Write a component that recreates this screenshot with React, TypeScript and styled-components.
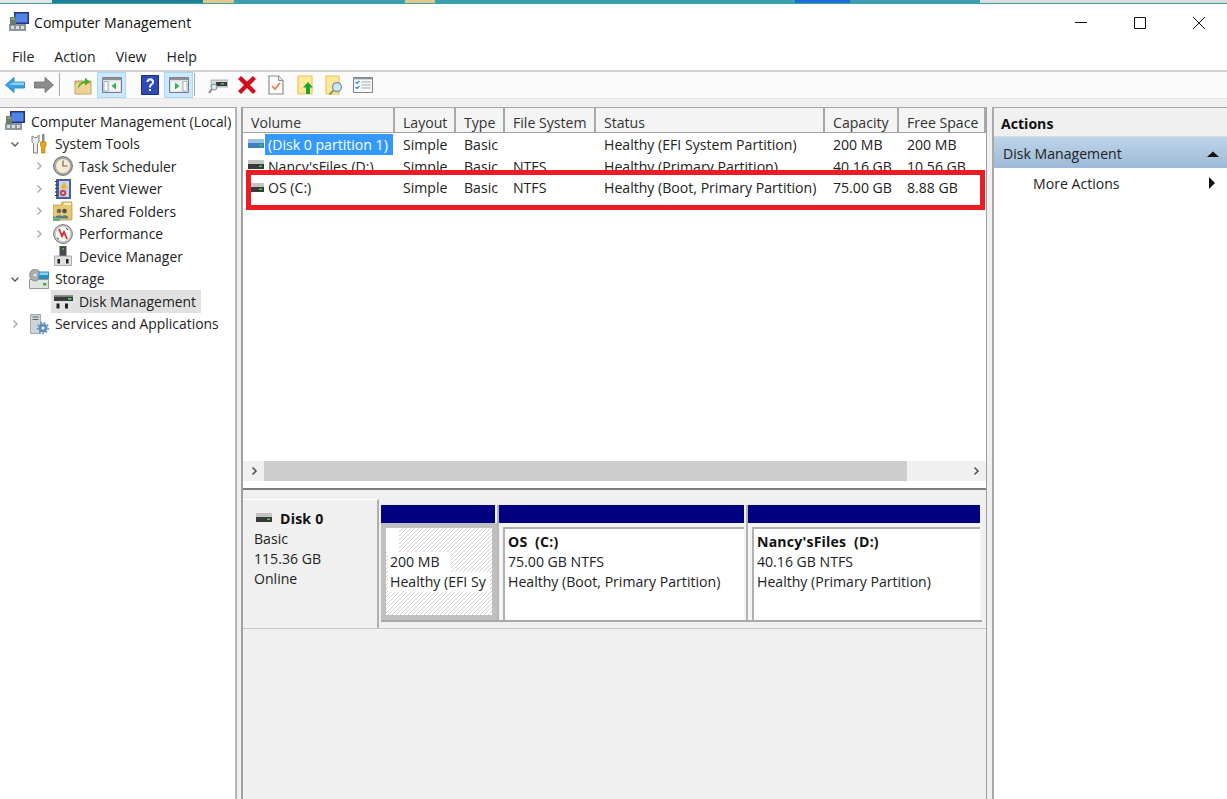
import React from 'react'
import styled, { createGlobalStyle } from 'styled-components'

const GlobalStyle = createGlobalStyle`
  html, body {
    margin: 0;
    padding: 0;
    background: #f0f0f0;
  }
  * {
    box-sizing: border-box;
  }
`

const Window = styled.div`
  display: flex;
  flex-direction: column;
  width: 1227px;
  height: 799px;
  overflow: hidden;
  font-family: 'Open Sans', 'Noto Sans', sans-serif;
  font-size: 14.1px;
  color: #1c1c1c;
  background: #f0f0f0;
`

const DesktopStrip = styled.div`
  display: flex;
  flex: none;
  height: 4px;
  border-bottom: 1px solid #3f9db0;
`

const StripPiece = styled.div<{ $width: number; $color: string }>`
  flex: none;
  width: ${({ $width }) => $width}px;
  background: ${({ $color }) => $color};
`

const TitleBar = styled.div`
  display: flex;
  flex: none;
  align-items: center;
  justify-content: space-between;
  height: 38px;
  padding-left: 9px;
  background: #fff;
`

const TitleText = styled.div`
  display: flex;
  align-items: center;
  gap: 5px;
  padding-bottom: 2px;
  color: #111;
`

const WindowControls = styled.div`
  display: flex;
  align-items: center;
  margin-right: -1px;
`

const ControlButton = styled.div`
  display: flex;
  align-items: center;
  justify-content: center;
  width: 59px;
  height: 38px;
`

const MenuBar = styled.div`
  display: flex;
  flex: none;
  align-items: center;
  gap: 20px;
  height: 28px;
  padding-left: 12px;
  background: #fff;
  color: #222;
`

const Toolbar = styled.div`
  display: flex;
  flex: none;
  align-items: stretch;
  height: 29px;
  background: #fbfbfb;
  border-top: 2px solid #d0d0d0;
  border-bottom: 1px solid #e6e6e6;
`

const ToolButton = styled.div<{ $active?: boolean; $gap?: number }>`
  display: flex;
  flex: none;
  align-items: center;
  justify-content: center;
  width: 29px;
  margin-left: ${({ $gap }) => $gap ?? 0}px;
  background: ${({ $active }) => ($active ? '#cce8ff' : 'transparent')};
  border: 1px solid ${({ $active }) => ($active ? '#a8d8fb' : 'transparent')};
`

const ToolSeparator = styled.div`
  flex: none;
  width: 1px;
  margin: 1px 0 2px 1px;
  background: #a8a8a8;
`

const Body = styled.div`
  display: flex;
  flex: 1;
  gap: 4px;
  min-height: 0;
  padding-top: 8px;
`

const TreePane = styled.div`
  flex: none;
  width: 237px;
  padding-top: 2px;
  font-size: 13.9px;
  background: #fff;
  border-top: 1px solid #a9a9a9;
  border-right: 2px solid #b4b4b4;
`

const TreeRow = styled.div<{ $level: number }>`
  display: flex;
  align-items: center;
  height: 22.5px;
  padding-left: ${({ $level }) => ($level === 0 ? 3 : 7 + ($level - 1) * 24)}px;
  white-space: nowrap;
  color: #222;
`

const ChevronSlot = styled.div`
  display: flex;
  flex: none;
  align-items: center;
  justify-content: center;
  width: 16px;
  margin-right: 4px;
`

const TreeItem = styled.div<{ $selected?: boolean }>`
  display: flex;
  align-items: center;
  gap: 6px;
  height: 23px;
  padding: 0 5px 0 2px;
  background: ${({ $selected }) => ($selected ? '#e1e1e1' : 'transparent')};
`

const CenterPane = styled.div`
  display: flex;
  flex: none;
  flex-direction: column;
  width: 746px;
  border-left: 2px solid #a0a0a0;
  border-right: 1px solid #a0a0a0;
`

const ListPanel = styled.div`
  display: flex;
  flex: none;
  flex-direction: column;
  height: 383px;
  background: #fff;
  border-top: 1px solid #a9a9a9;
  border-bottom: 2px solid #7d7d7d;
`

const ListGrid = styled.div`
  flex: 1;
`

const columns = '152px 61px 49px 91px 229px 74px 87px'

const HeaderRow = styled.div`
  display: grid;
  grid-template-columns: ${columns};
  height: 25px;
  background: #f4f4f4;
  border-bottom: 1px solid #a0a0a0;
`

const HeaderCell = styled.div`
  display: flex;
  align-items: center;
  padding: 5px 0 0 8px;
  white-space: nowrap;
  color: #333;
  border-right: 2px solid #a9a9a9;
`

const RowsBody = styled.div`
  padding-top: 1px;
`

const VolumeRow = styled.div<{ $boxed?: boolean }>`
  display: grid;
  grid-template-columns: ${columns};
  align-items: center;
  height: 21.5px;
  position: relative;
  white-space: nowrap;
  color: #222;
  z-index: ${({ $boxed }) => ($boxed ? 1 : 0)};

  ${({ $boxed }) =>
    $boxed &&
    `
    &::before {
      content: '';
      position: absolute;
      top: -7px;
      bottom: -11px;
      left: 3px;
      right: 1px;
      background: #fff;
      border: 5px solid #ed1c24;
      z-index: -1;
    }
  `}
`

const Cell = styled.div`
  padding-left: 8px;
`

const VolumeCell = styled.div<{ $inset?: number }>`
  display: flex;
  align-items: center;
  gap: 4px;
  padding-left: ${({ $inset }) => $inset ?? 5}px;
`

const VolumeName = styled.span<{ $selected?: boolean }>`
  display: inline-block;
  height: 21px;
  line-height: 21px;
  margin-left: -3px;
  padding: 0 5px 0 3px;
  background: ${({ $selected }) => ($selected ? '#3399ff' : 'transparent')};
  color: ${({ $selected }) => ($selected ? '#fff' : 'inherit')};
`

const ScrollBar = styled.div`
  display: flex;
  flex: none;
  align-items: stretch;
  height: 20px;
  margin-bottom: 7px;
  background: #f0f0f0;
`

const ScrollArrow = styled.div`
  display: flex;
  flex: none;
  align-items: center;
  justify-content: center;
  width: 21px;
`

const ScrollTrack = styled.div`
  flex: 1;
  padding-right: 58px;
`

const ScrollThumb = styled.div`
  height: 100%;
  background: #cdcdcd;
`

const DiskPanel = styled.div`
  flex: 1;
  padding-top: 9px;
  background: #f0f0f0;
`

const DiskRow = styled.div`
  display: flex;
  gap: 2px;
  height: 130px;
  border-bottom: 1px solid #c8c8c8;
`

const DiskCard = styled.div`
  flex: none;
  width: 136px;
  padding: 9px 0 0 11px;
  line-height: 20px;
  color: #222;
  background: #f0f0f0;
  border-top: 1px solid #fff;
  border-right: 2px solid #b0b0b0;
`

const DiskName = styled.div`
  display: flex;
  align-items: center;
  gap: 8px;
  padding-left: 2px;
  font-weight: 700;
  letter-spacing: 0.2px;
  color: #111;
`

const PartitionRow = styled.div`
  display: flex;
  flex: none;
  height: 117px;
  margin-top: 6px;
  border-bottom: 2px solid #a9a9a9;
`

const Partition = styled.div<{ $width: number; $first?: boolean }>`
  display: flex;
  flex: none;
  flex-direction: column;
  width: ${({ $width }) => $width}px;
  border-left: ${({ $first }) => ($first ? 'none' : '2px solid #b4b4b4')};
`

const PartitionBar = styled.div`
  flex: none;
  height: 18px;
  margin-right: 2px;
  background: #000080;
`

const PartitionFrame = styled.div<{ $selected?: boolean }>`
  flex: 1;
  min-height: 0;
  padding: ${({ $selected }) => ($selected ? '5px 5px 5px 5px' : '4px 2px 0 4px')};
  background: ${({ $selected }) => ($selected ? '#c0c0c0' : '#f4f4f4')};
`

const PartitionBody = styled.div<{ $hatched?: boolean }>`
  height: 100%;
  overflow: hidden;
  padding: ${({ $hatched }) => ($hatched ? '0 0 0 2px' : '3px 0 0 3px')};
  line-height: 20px;
  white-space: nowrap;
  color: #222;
  background: ${({ $hatched }) =>
    $hatched
      ? 'linear-gradient(135deg, #d2d2d2 12.5%, #fff 12.5%, #fff 50%, #d2d2d2 50%, #d2d2d2 62.5%, #fff 62.5%) 0 0 / 4px 4px'
      : '#fff'};
  border-top: ${({ $hatched }) => ($hatched ? 'none' : '2px solid #b0b0b0')};
  border-left: ${({ $hatched }) => ($hatched ? 'none' : '2px solid #b0b0b0')};
`

const PartitionName = styled.div`
  font-weight: 700;
  letter-spacing: 0.2px;
  color: #111;
`

const HatchSpacer = styled.div`
  width: 13px;
  height: 24px;
  margin-left: -2px;
  background: #fff;
`

const HatchLine = styled.div<{ $width: number }>`
  width: ${({ $width }) => $width}px;
  padding-left: 2px;
  overflow: hidden;
  background: #fff;
`

const ActionsPane = styled.div`
  flex: 1;
  margin-left: 1px;
  background: #fff;
  border-top: 1px solid #a9a9a9;
  border-left: 2px solid #a9a9a9;
`

const ActionsTitle = styled.div`
  display: flex;
  align-items: center;
  height: 29px;
  padding: 3px 0 0 7px;
  font-weight: 700;
  color: #111;
  background: #f0f0f0;
  border-bottom: 1px solid #d8d8d8;
`

const ActionsGroup = styled.div`
  display: flex;
  align-items: center;
  justify-content: space-between;
  height: 31px;
  padding: 2px 8px 0 9px;
  color: #222;
  background: linear-gradient(#bdd5ea, #9db9d6);
`

const ActionLink = styled.div`
  display: flex;
  align-items: center;
  justify-content: space-between;
  height: 30px;
  padding: 0 9px 0 39px;
  color: #222;
`

const Glyph = styled.svg<{ $size?: number }>`
  flex: none;
  display: block;
  width: ${({ $size }) => $size ?? 20}px;
  height: ${({ $size }) => $size ?? 20}px;
`

const Chevron = ({ open, dark }: { open?: boolean; dark?: boolean }) => (
  <Glyph $size={10} viewBox="0 0 10 10">
    <path
      d={open ? 'M1.5 3.5 5 7l3.5-3.5' : 'M3.5 1.5 7 5 3.5 8.5'}
      fill="none"
      stroke={open || dark ? '#555' : '#a6a6a6'}
      strokeWidth={dark ? 1.6 : 1.3}
    />
  </Glyph>
)

const ComputerIcon = () => (
  <Glyph viewBox="0 0 20 20">
    <path d="M0 12h17v7H0z" fill="#8d969e" />
    <path d="M2 14h3v3H2zM7 14h3v3H7zM12 14h3v3h-3z" fill="#d8dde0" />
    <path d="M5 0h15v12H5z" fill="#26327e" />
    <path d="M6.500 1.500h12v9h-12z" fill="#4f86e6" />
    <path d="M1 5h6v8H1z" fill="#6d7a6f" />
    <path d="M2 6.500h4v1H2z" fill="#9ed27a" />
  </Glyph>
)

const ToolsIcon = () => (
  <Glyph viewBox="0 0 20 20">
    <path d="M3 2v6l1.500 1.500V19h4V9.500L10 8V1L8 3.500H5.500z" fill="#ececec" stroke="#777" strokeWidth="0.9" />
    <path d="M13 0h2.500v8H13z" fill="#8c8c8c" />
    <path d="M11.500 8h5.500v4l-1 1v6h-3.500v-6l-1-1z" fill="#e8a90f" stroke="#a86f00" strokeWidth="0.6" />
  </Glyph>
)

const ClockIcon = () => (
  <Glyph viewBox="0 0 20 20">
    <circle cx="10" cy="10" r="9.400" fill="#a9a9a9" stroke="#6f6f6f" />
    <circle cx="10" cy="10" r="7" fill="#f6ecd2" />
    <path d="M10 4.500V10h4.500" fill="none" stroke="#6a6a6a" strokeWidth="1.200" />
  </Glyph>
)

const EventIcon = () => (
  <Glyph viewBox="0 0 20 20">
    <path d="M3 0h15v20H3z" fill="#4a5f9c" />
    <path d="M6 2h10v16H6z" fill="#c9d5ea" />
    <path d="M2 2h2.500v1H2zM2 5.500h2.500v1H2zM2 9h2.500v1H2zM2 12.500h2.500v1H2zM2 16h2.500v1H2z" fill="#27335c" />
    <path d="M11 3l3.500 6.500h-7z" fill="#e9b80f" />
    <circle cx="10" cy="14" r="3.300" fill="#c9485a" />
    <circle cx="10" cy="14" r="1" fill="#fbe3e3" />
  </Glyph>
)

const SharedIcon = () => (
  <Glyph viewBox="0 0 20 20">
    <path d="M0 4h8l1-3h10v18H0z" fill="#e8c873" stroke="#b3924a" strokeWidth="0.7" />
    <path d="M11 2h7v2h-7z" fill="#fff4cf" />
    <circle cx="6" cy="10" r="2.300" fill="#6b6b52" />
    <circle cx="11.500" cy="10" r="2.300" fill="#4f4f3f" />
    <path d="M2 17.500c0-4.500 8-4.500 8 0zM8 17.500c0-4.500 7.500-4.500 7.500 0z" fill="#4f7f8c" />
    <path d="M1 15v4h6" fill="none" stroke="#3fa46a" strokeWidth="1.400" />
  </Glyph>
)

const GaugeIcon = () => (
  <Glyph viewBox="0 0 20 20">
    <circle cx="10" cy="10" r="9.400" fill="#c9c9c9" stroke="#767676" />
    <circle cx="10" cy="10" r="7.200" fill="#fafafa" />
    <path d="M6 5l3 7 2-4 3 7" fill="none" stroke="#d52b2b" strokeWidth="1.800" />
    <path d="M13 4l2 2M4 14l2 1" stroke="#2e6a3c" strokeWidth="1" />
  </Glyph>
)

const DeviceIcon = () => (
  <Glyph viewBox="0 0 20 20">
    <path d="M6.500 0h7v10h-7z" fill="#4a4a4a" />
    <path d="M9.500 2h1.500v2H9.500z" fill="#48c34c" />
    <path d="M1.500 10h17v9.500h-17z" fill="#dfdfdf" stroke="#9a9a9a" strokeWidth="0.8" />
    <path d="M4.500 13h2.500v4.500H4.500zM13 13h2.500v4.500H13z" fill="#222" />
  </Glyph>
)

const StorageIcon = () => (
  <Glyph viewBox="0 0 20 20">
    <path d="M0.500 10.500h19v9h-19z" fill="#e2e4df" stroke="#7e7e7e" strokeWidth="0.8" />
    <path d="M14 14h3.500v2.500H14z" fill="#3fae45" />
    <ellipse cx="6" cy="6" rx="5.500" ry="6" fill="#a9adac" stroke="#777" strokeWidth="0.6" />
    <circle cx="6" cy="6" r="1.600" fill="#e5e5e5" />
    <path d="M9.500 2.500H20V10H9.500z" fill="#2a8fc4" />
    <path d="M10.500 3.500H19v2.500h-8.500z" fill="#8fd2ee" />
  </Glyph>
)

const DiskIcon = () => (
  <Glyph viewBox="0 0 20 20">
    <path d="M1 4h19v6H1z" fill="#3d3d3d" />
    <path d="M1 4h19v1.800H1z" fill="#8f8f8f" />
    <path d="M15 7h3.500v1.800H15z" fill="#3ed14d" />
    <path d="M1 10h16.500v9H1z" fill="#e3e3e3" />
    <path d="M3.500 12.500h3v5h-3zM12 12.500h3v5h-3z" fill="#1f1f1f" />
  </Glyph>
)

const ServicesIcon = () => (
  <Glyph viewBox="0 0 20 20">
    <path d="M1.500 0.500h10v19h-10z" fill="#cfd4d8" stroke="#868b90" strokeWidth="0.7" />
    <path d="M3.500 2.500h6v1h-6zM3.500 5h6v1h-6z" fill="#5d6871" />
    <circle cx="14" cy="14" r="4.500" fill="#5e8fc0" />
    <circle cx="14" cy="14" r="5.300" fill="none" stroke="#5e8fc0" strokeWidth="1.500" strokeDasharray="1.800 1.800" />
    <circle cx="14" cy="14" r="1.500" fill="#fff" />
  </Glyph>
)

const BackIcon = () => (
  <Glyph viewBox="0 0 20 20">
    <path d="M9 2.500 0.500 10 9 17.500V13h10.500V7H9z" fill="#3aa0e8" stroke="#2478b8" strokeWidth="0.8" />
    <path d="M8 7.500h11V10H4z" fill="#8ed0f7" />
  </Glyph>
)

const ForwardIcon = () => (
  <Glyph viewBox="0 0 20 20">
    <path d="M11 2.500l8.500 7.500-8.500 7.500V13H.5V7H11z" fill="#8c8c8c" stroke="#6c6c6c" strokeWidth="0.8" />
  </Glyph>
)

const FolderUpIcon = () => (
  <Glyph viewBox="0 0 20 20">
    <path d="M2 6h16v13H2z" fill="#e4c179" stroke="#a88844" strokeWidth="0.8" />
    <path d="M2.500 9h15v9.500h-15z" fill="#efd595" />
    <path d="M5 14c0-5 3-7 7-8V2.500l5 4.500-5 3.500V8c-3 .5-5 2-7 6z" fill="#4cae2c" />
  </Glyph>
)

const PaneIcon = ({ side }: { side: 'left' | 'right' }) => (
  <Glyph viewBox="0 0 20 20">
    <path d="M0.500 2.500h19v15H0.500z" fill="#dde3e7" stroke="#787d82" />
    <path d="M0.500 2.500h19v2.500H0.500z" fill="#8c9196" />
    {side === 'left' ? (
      <>
        <path d="M2 6.500h4v9.500H2z" fill="#fff" stroke="#7a8ba0" strokeWidth="0.6" />
        <path d="M7.500 6.500H18V16H7.500z" fill="#f4f6f7" />
        <path d="M14 7.500v7L9.500 11z" fill="#35b548" />
      </>
    ) : (
      <>
        <path d="M2 6.500h10.500V16H2z" fill="#f4f6f7" />
        <path d="M14 6.500h4v9.500h-4z" fill="#fff" stroke="#7a8ba0" strokeWidth="0.6" />
        <path d="M6 7.500v7l4.500-3.500z" fill="#35b548" />
      </>
    )}
  </Glyph>
)

const HelpIcon = () => (
  <Glyph viewBox="0 0 20 20">
    <path d="M1.500 0.500h17v19h-17z" fill="#2f49b8" stroke="#1d2d7c" />
    <path d="M6.500 7c0-5 7.500-5 7.500 0 0 3-3 2.500-3 5.500H9c0-4 3-3.500 3-5.500 0-2-3.500-2-3.500 0z" fill="#fff" />
    <path d="M9 14h2v2H9z" fill="#fff" />
  </Glyph>
)

const ConnectIcon = () => (
  <Glyph viewBox="0 0 20 20">
    <path d="M3 5h17v7H3z" fill="#d8d8d8" stroke="#8a8a8a" strokeWidth="0.6" />
    <path d="M8 7h11v4H8z" fill="#3c3c3c" />
    <path d="M13 8h3v1.500h-3z" fill="#3ed14d" />
    <circle cx="6" cy="12" r="3" fill="#d5e6f2" stroke="#7c8a94" />
    <path d="M4 14 1 18" stroke="#8a8a6e" strokeWidth="1.800" />
  </Glyph>
)

const DeleteIcon = () => (
  <Glyph viewBox="0 0 20 20">
    <path d="M4 1l6 5.500L16 1l3 3-6 6 6 6-3 3-6-6-6 6-3-3 6-6-6-6z" fill="#d00f1b" />
  </Glyph>
)

const PropertiesIcon = () => (
  <Glyph viewBox="0 0 20 20">
    <path d="M3 1h9.500L17 5.500V19H3z" fill="#fafafa" stroke="#8c8c8c" strokeWidth="1.200" />
    <path d="M12.500 1v4.500H17" fill="#e6e6e6" stroke="#8c8c8c" />
    <path d="M6 11l3 3 5-6" fill="none" stroke="#ee7a3c" strokeWidth="1.600" />
  </Glyph>
)

const ExportIcon = () => (
  <Glyph viewBox="0 0 20 20">
    <path d="M3 1h14v18H3z" fill="#fde99a" stroke="#edc65a" strokeWidth="1.200" />
    <path d="M13 7l5 5.500h-3V19h-4v-6.500H8z" fill="#1fa32e" />
  </Glyph>
)

const FindIcon = () => (
  <Glyph viewBox="0 0 20 20">
    <path d="M2 1h13v18H2z" fill="#fde99a" stroke="#edc65a" strokeWidth="1.200" />
    <circle cx="13" cy="12" r="4.500" fill="#cfe6f5" stroke="#7d97a8" strokeWidth="1.300" />
    <path d="M9.500 15.500 5.500 19.500" stroke="#8f8f6f" strokeWidth="2" />
  </Glyph>
)

const ChecklistIcon = () => (
  <Glyph viewBox="0 0 20 20">
    <path d="M0.500 2.500h19v15H0.500z" fill="#f6f8fa" stroke="#7d8388" />
    <path d="M0.500 2.500h19v1.800H0.500z" fill="#8c9196" />
    <path d="M2.500 7l1.500 1.500L6.500 6M2.500 12l1.500 1.500 2.500-2.500" fill="none" stroke="#2f7fd0" strokeWidth="1.100" />
    <path d="M8.500 7h9M8.500 10h9M8.500 13h9" stroke="#a5abb0" />
  </Glyph>
)

const DriveIcon = ({ tone, size = 16 }: { tone: 'blue' | 'dark'; size?: number }) => (
  <Glyph $size={size} viewBox={size < 16 ? '3 0 13 13' : '0 0 16 16'}>
    <path d="M0 2h16v4H0z" fill={tone === 'blue' ? '#9cc3e6' : '#c4c4c4'} />
    <path d="M0 6h16v5H0z" fill={tone === 'blue' ? '#3f7fbd' : '#3a3a3a'} />
    <path d="M11 7.500h3V9h-3z" fill="#3ed14d" />
  </Glyph>
)

const CaretIcon = ({ dir }: { dir: 'up' | 'right' }) => (
  <Glyph $size={12} viewBox="0 0 12 12">
    <path d={dir === 'up' ? 'M0 9l6-5.500L12 9z' : 'M3 0l6 6-6 6z'} fill="#111" />
  </Glyph>
)

const MinimizeGlyph = () => (
  <Glyph $size={12} viewBox="0 0 12 12">
    <path d="M0 5.500h12" stroke="#111" />
  </Glyph>
)

const MaximizeGlyph = () => (
  <Glyph $size={12} viewBox="0 0 12 12">
    <path d="M.5.500h11v11H.5z" fill="none" stroke="#111" />
  </Glyph>
)

const CloseGlyph = () => (
  <Glyph $size={12} viewBox="0 0 12 12">
    <path d="M0 0l12 12M12 0 0 12" stroke="#111" />
  </Glyph>
)

const stripPieces = [
  { width: 52, color: '#e4e4e4' },
  { width: 151, color: '#1f7f98' },
  { width: 31, color: '#e2c887' },
  { width: 171, color: '#3f9db0' },
  { width: 30, color: '#e2c887' },
  { width: 360, color: '#3aa0ae' },
  { width: 55, color: '#1c6fd8' },
  { width: 130, color: '#3f9db0' },
  { width: 247, color: '#dcdcdc' },
]

const treeRows = [
  { level: 0, label: 'Computer Management (Local)', icon: <ComputerIcon /> },
  { level: 1, label: 'System Tools', icon: <ToolsIcon />, chevron: 'open' },
  { level: 2, label: 'Task Scheduler', icon: <ClockIcon />, chevron: 'closed' },
  { level: 2, label: 'Event Viewer', icon: <EventIcon />, chevron: 'closed' },
  { level: 2, label: 'Shared Folders', icon: <SharedIcon />, chevron: 'closed' },
  { level: 2, label: 'Performance', icon: <GaugeIcon />, chevron: 'closed' },
  { level: 2, label: 'Device Manager', icon: <DeviceIcon />, chevron: 'none' },
  { level: 1, label: 'Storage', icon: <StorageIcon />, chevron: 'open' },
  { level: 2, label: 'Disk Management', icon: <DiskIcon />, chevron: 'none', selected: true },
  { level: 1, label: 'Services and Applications', icon: <ServicesIcon />, chevron: 'closed' },
]

const headers = ['Volume', 'Layout', 'Type', 'File System', 'Status', 'Capacity', 'Free Space']

const volumes = [
  {
    name: '(Disk 0 partition 1)',
    fs: '',
    status: 'Healthy (EFI System Partition)',
    capacity: '200 MB',
    free: '200 MB',
    tone: 'blue' as const,
    selected: true,
  },
  {
    name: "Nancy'sFiles (D:)",
    fs: 'NTFS',
    status: 'Healthy (Primary Partition)',
    capacity: '40.16 GB',
    free: '10.56 GB',
    tone: 'dark' as const,
  },
  {
    name: 'OS (C:)',
    fs: 'NTFS',
    status: 'Healthy (Boot, Primary Partition)',
    capacity: '75.00 GB',
    free: '8.88 GB',
    tone: 'dark' as const,
    boxed: true,
  },
]

export default function App() {
  return (
    <Window>
      <GlobalStyle />
      <DesktopStrip>
        {stripPieces.map((piece, i) => (
          <StripPiece key={i} $width={piece.width} $color={piece.color} />
        ))}
      </DesktopStrip>

      <TitleBar>
        <TitleText>
          <ComputerIcon />
          Computer Management
        </TitleText>
        <WindowControls>
          <ControlButton><MinimizeGlyph /></ControlButton>
          <ControlButton><MaximizeGlyph /></ControlButton>
          <ControlButton><CloseGlyph /></ControlButton>
        </WindowControls>
      </TitleBar>

      <MenuBar>
        <span>File</span>
        <span>Action</span>
        <span>View</span>
        <span>Help</span>
      </MenuBar>

      <Toolbar>
        <ToolButton><BackIcon /></ToolButton>
        <ToolButton><ForwardIcon /></ToolButton>
        <ToolSeparator />
        <ToolButton $gap={8}><FolderUpIcon /></ToolButton>
        <ToolButton $active><PaneIcon side="left" /></ToolButton>
        <ToolButton $gap={9}><HelpIcon /></ToolButton>
        <ToolButton $active><PaneIcon side="right" /></ToolButton>
        <ToolSeparator />
        <ToolButton $gap={8}><ConnectIcon /></ToolButton>
        <ToolButton><DeleteIcon /></ToolButton>
        <ToolButton><PropertiesIcon /></ToolButton>
        <ToolButton><ExportIcon /></ToolButton>
        <ToolButton><FindIcon /></ToolButton>
        <ToolButton><ChecklistIcon /></ToolButton>
      </Toolbar>

      <Body>
        <TreePane>
          {treeRows.map(row => (
            <TreeRow key={row.label} $level={row.level}>
              {row.chevron && (
                <ChevronSlot>
                  {row.chevron !== 'none' && <Chevron open={row.chevron === 'open'} />}
                </ChevronSlot>
              )}
              <TreeItem $selected={row.selected}>
                {row.icon}
                {row.label}
              </TreeItem>
            </TreeRow>
          ))}
        </TreePane>

        <CenterPane>
          <ListPanel>
            <ListGrid>
              <HeaderRow>
                {headers.map(title => (
                  <HeaderCell key={title}>{title}</HeaderCell>
                ))}
              </HeaderRow>
              <RowsBody>
                {volumes.map(volume => (
                  <VolumeRow key={volume.name} $boxed={volume.boxed}>
                    <VolumeCell $inset={volume.boxed ? 8 : 5}>
                      <DriveIcon tone={volume.tone} size={volume.boxed ? 13 : 16} />
                      <VolumeName $selected={volume.selected}>{volume.name}</VolumeName>
                    </VolumeCell>
                    <Cell>Simple</Cell>
                    <Cell>Basic</Cell>
                    <Cell>{volume.fs}</Cell>
                    <Cell>{volume.status}</Cell>
                    <Cell>{volume.capacity}</Cell>
                    <Cell>{volume.free}</Cell>
                  </VolumeRow>
                ))}
              </RowsBody>
            </ListGrid>
            <ScrollBar>
              <ScrollArrow><Chevron dark /></ScrollArrow>
              <ScrollTrack><ScrollThumb /></ScrollTrack>
              <ScrollArrow><Chevron dark /></ScrollArrow>
            </ScrollBar>
          </ListPanel>

          <DiskPanel>
            <DiskRow>
              <DiskCard>
                <DiskName>
                  <DriveIcon tone="dark" size={16} />
                  Disk 0
                </DiskName>
                <div>Basic</div>
                <div>115.36 GB</div>
                <div>Online</div>
              </DiskCard>

              <PartitionRow>
                <Partition $width={116} $first>
                  <PartitionBar />
                  <PartitionFrame $selected>
                    <PartitionBody $hatched>
                      <HatchSpacer />
                      <HatchLine $width={63}>200 MB</HatchLine>
                      <HatchLine $width={102}>Healthy (EFI Sy</HatchLine>
                    </PartitionBody>
                  </PartitionFrame>
                </Partition>
                <Partition $width={249}>
                  <PartitionBar />
                  <PartitionFrame>
                    <PartitionBody>
                      <PartitionName>OS&nbsp; (C:)</PartitionName>
                      <div>75.00 GB NTFS</div>
                      <div>Healthy (Boot, Primary Partition)</div>
                    </PartitionBody>
                  </PartitionFrame>
                </Partition>
                <Partition $width={236}>
                  <PartitionBar />
                  <PartitionFrame>
                    <PartitionBody>
                      <PartitionName>Nancy'sFiles&nbsp; (D:)</PartitionName>
                      <div>40.16 GB NTFS</div>
                      <div>Healthy (Primary Partition)</div>
                    </PartitionBody>
                  </PartitionFrame>
                </Partition>
              </PartitionRow>
            </DiskRow>
          </DiskPanel>
        </CenterPane>

        <ActionsPane>
          <ActionsTitle>Actions</ActionsTitle>
          <ActionsGroup>
            Disk Management
            <CaretIcon dir="up" />
          </ActionsGroup>
          <ActionLink>
            More Actions
            <CaretIcon dir="right" />
          </ActionLink>
        </ActionsPane>
      </Body>
    </Window>
  )
}
